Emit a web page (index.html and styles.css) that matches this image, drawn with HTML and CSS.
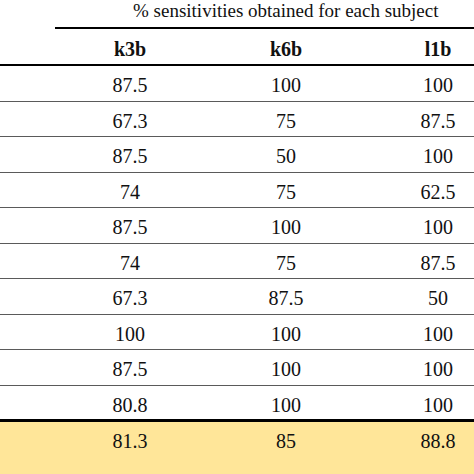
FILE: index.html
```html
<!DOCTYPE html>
<html>
<head>
<meta charset="utf-8">
<link rel="stylesheet" href="styles.css">
</head>
<body>
<div class="table">
  <div class="caption-row">
    <div class="blank"></div>
    <div class="caption">% sensitivities obtained for each subject</div>
  </div>
  <div class="row head">
    <div></div><div>k3b</div><div>k6b</div><div>l1b</div>
  </div>
  <div class="row"><div></div><div>87.5</div><div>100</div><div>100</div></div>
  <div class="row"><div></div><div>67.3</div><div>75</div><div>87.5</div></div>
  <div class="row"><div></div><div>87.5</div><div>50</div><div>100</div></div>
  <div class="row"><div></div><div>74</div><div>75</div><div>62.5</div></div>
  <div class="row"><div></div><div>87.5</div><div>100</div><div>100</div></div>
  <div class="row"><div></div><div>74</div><div>75</div><div>87.5</div></div>
  <div class="row"><div></div><div>67.3</div><div>87.5</div><div>50</div></div>
  <div class="row"><div></div><div>100</div><div>100</div><div>100</div></div>
  <div class="row"><div></div><div>87.5</div><div>100</div><div>100</div></div>
  <div class="row last"><div></div><div>80.8</div><div>100</div><div>100</div></div>
  <div class="row total"><div></div><div>81.3</div><div>85</div><div>88.8</div></div>
</div>
</body>
</html>
```

FILE: styles.css
```css
html, body {
  margin: 0;
  padding: 0;
  background: #ffffff;
  overflow: hidden;
}
body {
  width: 474px;
  height: 474px;
  font-family: "Liberation Serif", "Times New Roman", serif;
  color: #111;
}
.table {
  width: 474px;
}
.caption-row {
  display: grid;
  grid-template-columns: 55px 1fr;
  height: 29px;
}
.caption {
  border-bottom: 2px solid #000;
  font-size: 19px;
  line-height: 20px;
  padding-top: 1px;
  padding-left: 78px;
  box-sizing: border-box;
  height: 29px;
  white-space: nowrap;
}
.row {
  display: grid;
  grid-template-columns: 55px 150px 162px 1fr;
  height: 35.5px;
  box-sizing: border-box;
  border-bottom: 1px solid #5a5a5a;
  font-size: 20px;
  line-height: 20px;
}
.row > div {
  text-align: center;
  padding-top: 9px;
}
.row > div:last-child {
  padding-left: 35px;
}
.row.head {
  height: 37px;
  border-bottom: 2px solid #000;
  font-weight: bold;
}
.row.head > div { padding-top: 10px; }
.row.last {
  border-bottom: 3px solid #000;
  height: 36.5px;
}
.row.total {
  background: #ffe699;
  border-bottom: none;
  height: 60px;
}
```
